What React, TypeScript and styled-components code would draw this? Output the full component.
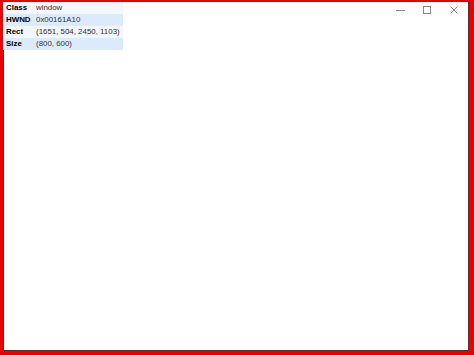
import { createGlobalStyle, styled } from "styled-components";

const GlobalStyle = createGlobalStyle`
  html, body {
    margin: 0;
    padding: 0;
    background: #ee0000;
  }
  #root {
    width: 474px;
    height: 355px;
  }
`;

type Info = { label: string; value: string };

const rows: Info[] = [
  { label: "Class", value: "window" },
  { label: "HWND", value: "0x00161A10" },
  { label: "Rect", value: "(1651, 504, 2450, 1103)" },
  { label: "Size", value: "(800, 600)" },
];

const App = () => {
  return (
    <>
      <GlobalStyle />
      <Frame>
        <Window>
          <TitleBar>
            <Control>
              <svg width="9" height="9" viewBox="0 0 9 9">
                <path d="M0 4.5h9" stroke="#8a8a8a" strokeWidth="1" />
              </svg>
            </Control>
            <Control>
              <svg width="9" height="9" viewBox="0 0 9 9">
                <rect x="0.5" y="0.5" width="7" height="7" fill="none" stroke="#8a8a8a" strokeWidth="1" />
              </svg>
            </Control>
            <Control>
              <svg width="9" height="9" viewBox="0 0 9 9">
                <path d="M0.5 0.5l7 7M7.5 0.5l-7 7" stroke="#8a8a8a" strokeWidth="1" />
              </svg>
            </Control>
          </TitleBar>
          <Body />
          <InfoTable>
            <tbody>
              {rows.map((r, i) => (
                <Row key={r.label} $odd={i % 2 === 1}>
                  <Label>{r.label}</Label>
                  <Value>{r.value}</Value>
                </Row>
              ))}
            </tbody>
          </InfoTable>
        </Window>
      </Frame>
    </>
  );
};

export default App;

const Frame = styled.div`
  box-sizing: border-box;
  width: 474px;
  height: 355px;
  padding: 2px 5px 4px 3px;
  display: flex;
`;

const Window = styled.div`
  position: relative;
  flex: 1;
  display: flex;
  flex-direction: column;
  background: #ffffff;
  border: 1px solid #3a3a3a;
  border-top: none;
`;

const TitleBar = styled.div`
  height: 16px;
  display: flex;
  justify-content: flex-end;
  align-items: center;
`;

const Control = styled.div`
  width: 27px;
  height: 16px;
  display: flex;
  align-items: center;
  justify-content: center;
`;

const Body = styled.div`
  flex: 1;
`;

const InfoTable = styled.table`
  position: absolute;
  top: 0;
  left: -1px;
  width: 120px;
  border-collapse: collapse;
  table-layout: fixed;
  font-family: "Liberation Sans", Arial, sans-serif;
  font-size: 7.9px;
  line-height: 12px;
`;

const Row = styled.tr<{ $odd: boolean }>`
  background: ${({ $odd }) => ($odd ? "#dcebfb" : "#f2f7fc")};
`;

const Label = styled.td`
  font-weight: bold;
  color: #000;
  padding: 0 0 0 3px;
  width: 27px;
`;

const Value = styled.td`
  color: #333;
  padding: 0 0 0 3px;
  white-space: nowrap;
`;
